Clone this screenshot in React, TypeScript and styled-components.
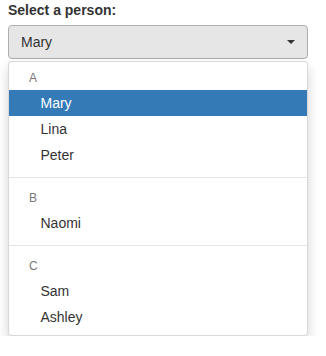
import React from "react";
import styled, { createGlobalStyle } from "styled-components";

const Global = createGlobalStyle`
  html, body { margin: 0; padding: 0; background: #fff; }
  body {
    font-family: "Liberation Sans", Arial, Helvetica, sans-serif;
    font-size: 14px;
    line-height: 1.42857143;
    color: #333;
  }
  * { box-sizing: border-box; }
`;

const Page = styled.div`
  padding: 0 8px;
  width: 316px;
`;

const Label = styled.label`
  display: block;
  font-weight: bold;
  line-height: 20px;
  margin-bottom: 5px;
`;

const Toggle = styled.button`
  display: flex;
  align-items: center;
  justify-content: space-between;
  width: 300px;
  height: 34px;
  padding: 6px 12px;
  font: inherit;
  color: #333;
  background: #e6e6e6;
  border: 1px solid #adadad;
  border-radius: 4px;
  text-align: left;
`;

const Caret = styled.span`
  width: 0;
  height: 0;
  border-top: 4px solid #333;
  border-left: 4px solid transparent;
  border-right: 4px solid transparent;
  margin-right: 0px;
`;

const Menu = styled.ul`
  list-style: none;
  margin: 2px 0 0;
  padding: 5px 0;
  width: 300px;
  background: #fff;
  border: 1px solid rgba(0, 0, 0, 0.15);
  border-radius: 4px;
  box-shadow: 0 6px 12px rgba(0, 0, 0, 0.175);
`;

const Header = styled.li`
  padding: 3px 20px;
  font-size: 12px;
  line-height: 1.42857143;
  color: #777;
`;

const Item = styled.li<{ $active?: boolean }>`
  padding: 3px 20px 3px 31.5px;
  line-height: 20px;
  color: ${(p) => (p.$active ? "#fff" : "#333")};
  background: ${(p) => (p.$active ? "#337ab7" : "transparent")};
`;

const Divider = styled.li`
  height: 1px;
  margin: 9px 0;
  background: #e5e5e5;
`;

const groups = [
  { name: "A", items: ["Mary", "Lina", "Peter"] },
  { name: "B", items: ["Naomi"] },
  { name: "C", items: ["Sam", "Ashley"] },
];

export default function App() {
  return (
    <Page>
      <Global />
      <Label>Select a person:</Label>
      <Toggle>
        <span>Mary</span>
        <Caret />
      </Toggle>
      <Menu>
        {groups.map((g, gi) => (
          <React.Fragment key={g.name}>
            {gi > 0 && <Divider />}
            <Header>{g.name}</Header>
            {g.items.map((it) => (
              <Item key={it} $active={it === "Mary"}>
                {it}
              </Item>
            ))}
          </React.Fragment>
        ))}
      </Menu>
    </Page>
  );
}
